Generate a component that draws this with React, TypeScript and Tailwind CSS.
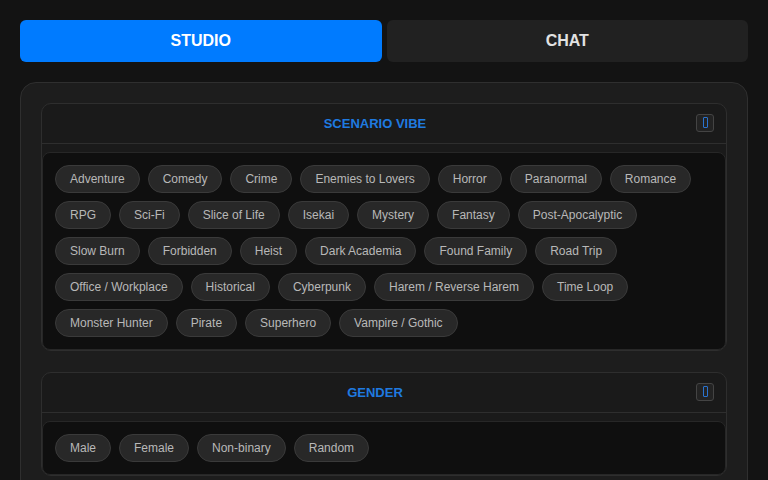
import React from "react";

const vibes = [
  "Adventure","Comedy","Crime","Enemies to Lovers","Horror","Paranormal","Romance",
  "RPG","Sci-Fi","Slice of Life","Isekai","Mystery","Fantasy","Post-Apocalyptic",
  "Slow Burn","Forbidden","Heist","Dark Academia","Found Family","Road Trip",
  "Office / Workplace","Historical","Cyberpunk","Harem / Reverse Harem","Time Loop",
  "Monster Hunter","Pirate","Superhero","Vampire / Gothic",
];
const genders = ["Male","Female","Non-binary","Random"];

function Section({ title, items }: { title: string; items: string[] }) {
  return (
    <div className="rounded-[10px] border border-[#2e2e2e] bg-[#1a1a1a]">
      <div className="flex h-[40px] items-center border-b border-[#2e2e2e] pl-3 pr-[12px]">
        <div className="flex-1 pt-[1px] text-center text-[13px] font-bold text-[#1f7ae0]">{title}</div>
        <div className="mb-[2px] flex h-[18px] w-[18px] items-center justify-center rounded-[3px] border border-[#444] bg-[#232323]">
          <span className="block h-[11px] w-[5px] rounded-[1px] border border-[#2a73d0]" />
        </div>
      </div>
      <div className="mt-2 flex flex-wrap gap-x-2 gap-y-2 rounded-[8px] border border-[#272727] bg-[#0f0f0f] p-3">
        {items.map((t) => (
          <span
            key={t}
            className="rounded-full border border-[#3a3a3a] bg-[#282828] px-[14px] py-[6px] text-[12px] leading-[14px] text-[#b8b8b8]"
          >
            {t}
          </span>
        ))}
      </div>
    </div>
  );
}

export default function App() {
  return (
    <div
      className="min-h-[480px] bg-[#131313] p-5"
      style={{ fontFamily: '"Liberation Sans", Arial, sans-serif' }}
    >
      <div className="flex gap-[5px]">
        <button className="h-[42px] flex-1 rounded-[6px] bg-[#007bff] text-[16px] font-bold text-white">
          STUDIO
        </button>
        <button className="h-[42px] flex-1 rounded-[6px] bg-[#212121] text-[16px] font-bold text-[#e2e2e2]">
          CHAT
        </button>
      </div>
      <div className="mt-5 flex flex-col gap-[21px] rounded-[16px] border border-[#2f2f2f] bg-[#1d1d1d] p-5">
        <Section title="SCENARIO VIBE" items={vibes} />
        <Section title="GENDER" items={genders} />
      </div>
    </div>
  );
}
